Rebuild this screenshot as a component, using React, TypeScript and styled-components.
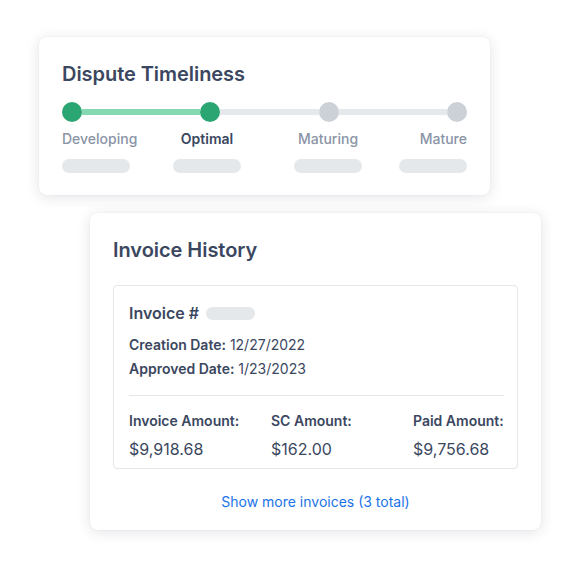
import React from 'react';
import styled, { createGlobalStyle } from 'styled-components';

const GlobalStyle = createGlobalStyle`
  body {
    margin: 0;
    background: #ffffff;
    font-family: Inter, "Noto Sans", sans-serif;
    color: #3b4760;
  }
`;

const Page = styled.div`
  width: 571px;
  height: 570px;
  padding: 37px 0 0 39px;
  box-sizing: border-box;
  display: flex;
  flex-direction: column;
`;

const Card = styled.section<{ $offset?: number }>`
  width: 451px;
  box-sizing: border-box;
  margin-left: ${({ $offset }) => $offset ?? 0}px;
  background: #ffffff;
  border-radius: 8px;
  box-shadow: 0 2px 14px rgba(30, 40, 60, 0.13), 0 0 2px rgba(30, 40, 60, 0.06);
  padding: 25px 23px 0 23px;
`;

const TimelineCard = styled(Card)`
  height: 158px;
`;

const InvoiceCard = styled(Card)`
  margin-top: 18px;
  height: 317px;
`;

const Title = styled.h2`
  margin: 0;
  font-size: 20px;
  line-height: 24px;
  font-weight: 600;
  color: #3b4760;
  letter-spacing: -0.05px;
`;

const Track = styled.div`
  display: flex;
  align-items: center;
  margin-top: 16px;
  height: 20px;
`;

const Dot = styled.span<{ $done?: boolean }>`
  width: 20px;
  height: 20px;
  border-radius: 50%;
  flex: none;
  background: ${({ $done }) => ($done ? '#2ba673' : '#ccd1d8')};
`;

const Segment = styled.span<{ $done?: boolean; $grow: number }>`
  flex: ${({ $grow }) => $grow} 1 0;
  height: 6px;
  background: ${({ $done }) => ($done ? '#85d8b1' : '#e6e9ec')};
`;

const Steps = styled.div`
  display: grid;
  grid-template-columns: 88px 114px 128px 1fr;
  margin-top: 7px;
`;

const Step = styled.div<{ $align: 'flex-start' | 'center' | 'flex-end' }>`
  display: flex;
  flex-direction: column;
  align-items: ${({ $align }) => $align};
`;

const StepLabel = styled.span<{ $active?: boolean }>`
  font-size: 14px;
  line-height: 20px;
  font-weight: ${({ $active }) => ($active ? 600 : 500)};
  color: ${({ $active }) => ($active ? '#3b4760' : '#8a94a6')};
  white-space: nowrap;
`;

const Pill = styled.span<{ $w: number; $h?: number }>`
  display: inline-block;
  width: ${({ $w }) => $w}px;
  height: ${({ $h }) => $h ?? 14}px;
  border-radius: 8px;
  background: #e4e8eb;
`;

const StepPill = styled(Pill)`
  margin-top: 10px;
`;

const InvoiceBox = styled.div`
  margin-top: 23px;
  border: 1px solid #e3e6ea;
  border-radius: 4px;
  padding: 16px 13px 11px 15px;
  height: 184px;
  box-sizing: border-box;
`;

const InvoiceHead = styled.div`
  display: flex;
  align-items: center;
  gap: 7px;
  font-size: 16px;
  line-height: 22px;
  font-weight: 600;
  color: #3b4760;
`;

const DateList = styled.div`
  margin-top: 9px;
  display: flex;
  flex-direction: column;
`;

const DateRow = styled.div`
  font-size: 14px;
  line-height: 24px;
  color: #3b4760;

  b {
    font-weight: 600;
  }
`;

const Divider = styled.hr`
  border: none;
  border-top: 1px solid #e3e6ea;
  margin: 14px 0 0 0;
`;

const Amounts = styled.div`
  display: grid;
  grid-template-columns: 142px 142px 1fr;
  margin-top: 15px;
`;

const Amount = styled.div`
  display: flex;
  flex-direction: column;
  gap: 8px;
`;

const AmountLabel = styled.span`
  font-size: 14px;
  line-height: 20px;
  font-weight: 600;
  color: #3b4760;
  white-space: nowrap;
`;

const AmountValue = styled.span`
  font-size: 16px;
  line-height: 20px;
  color: #3b4760;
`;

const MoreLink = styled.a`
  display: block;
  text-align: center;
  margin-top: 24px;
  font-size: 14px;
  line-height: 18px;
  color: #1a73e8;
  text-decoration: none;
  cursor: pointer;
`;

const steps = [
  { label: 'Developing', align: 'flex-start' as const, done: true },
  { label: 'Optimal', align: 'center' as const, done: true, active: true },
  { label: 'Maturing', align: 'center' as const, done: false },
  { label: 'Mature', align: 'flex-end' as const, done: false },
];

const segments = [118, 98, 108];

const amounts = [
  { label: 'Invoice Amount:', value: '$9,918.68' },
  { label: 'SC Amount:', value: '$162.00' },
  { label: 'Paid Amount:', value: '$9,756.68' },
];

export default function App() {
  return (
    <>
      <GlobalStyle />
      <Page>
        <TimelineCard>
          <Title>Dispute Timeliness</Title>
          <Track>
            {steps.map((s, i) => (
              <React.Fragment key={s.label}>
                <Dot $done={s.done} />
                {i < segments.length && (
                  <Segment $grow={segments[i]} $done={steps[i + 1].done} />
                )}
              </React.Fragment>
            ))}
          </Track>
          <Steps>
            {steps.map((s) => (
              <Step key={s.label} $align={s.align}>
                <StepLabel $active={s.active}>{s.label}</StepLabel>
                <StepPill $w={68} />
              </Step>
            ))}
          </Steps>
        </TimelineCard>

        <InvoiceCard $offset={51}>
          <Title>Invoice History</Title>
          <InvoiceBox>
            <InvoiceHead>
              Invoice # <Pill $w={49} $h={13} />
            </InvoiceHead>
            <DateList>
              <DateRow>
                <b>Creation Date:</b> 12/27/2022
              </DateRow>
              <DateRow>
                <b>Approved Date:</b> 1/23/2023
              </DateRow>
            </DateList>
            <Divider />
            <Amounts>
              {amounts.map((a) => (
                <Amount key={a.label}>
                  <AmountLabel>{a.label}</AmountLabel>
                  <AmountValue>{a.value}</AmountValue>
                </Amount>
              ))}
            </Amounts>
          </InvoiceBox>
          <MoreLink>Show more invoices (3 total)</MoreLink>
        </InvoiceCard>
      </Page>
    </>
  );
}
